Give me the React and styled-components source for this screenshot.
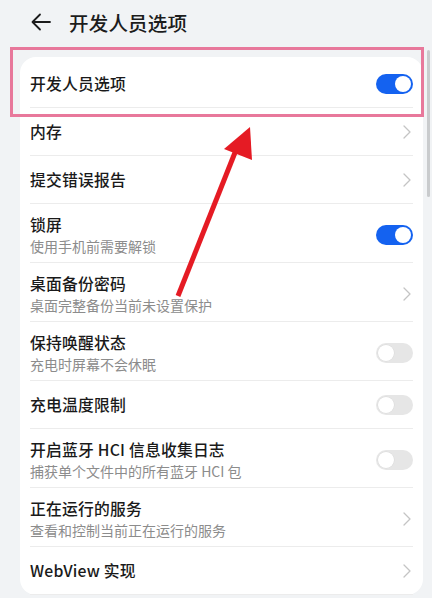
import React from "react";
import styled, { createGlobalStyle } from "styled-components";

const GlobalStyle = createGlobalStyle`
  html, body {
    margin: 0;
    padding: 0;
    background: #f1f3f5;
  }
  *, *::before, *::after {
    box-sizing: border-box;
  }
  body {
    font-family: "Noto Sans CJK SC", "Noto Sans", sans-serif;
    color: #1a1a1a;
  }
`;

const Page = styled.div`
  position: relative;
  width: 432px;
  height: 598px;
  overflow: hidden;
  background: #f1f3f5;
`;

const Header = styled.header`
  height: 44px;
  display: flex;
  align-items: center;
  padding-left: 31px;
  gap: 18px;
`;

const Title = styled.h1`
  margin: 0;
  font-size: 19.5px;
  font-weight: 500;
  color: #1c1c1c;
  letter-spacing: 0.2px;
`;

const Content = styled.div`
  padding: 13px 9px 0 20px;
`;

const Card = styled.div`
  position: relative;
  background: #ffffff;
  border-radius: 16px;
  padding: 3px 10px 0;
`;

const Highlight = styled.div`
  position: absolute;
  left: -10px;
  top: -10px;
  right: -1px;
  height: 70px;
  border: 3px solid #e8789b;
  pointer-events: none;
`;

const RowWrap = styled.div`
  display: flex;
  align-items: center;
  justify-content: space-between;
  height: ${(p) => (p.$sub ? "59px" : "48px")};
  padding-top: ${(p) => (p.$sub ? "3px" : "0")};
  border-bottom: 1px solid #ececec;
`;

const Texts = styled.div`
  display: flex;
  flex-direction: column;
  gap: 2px;
`;

const Label = styled.span`
  font-size: 15.8px;
  font-weight: 500;
  color: #1a1a1a;
  line-height: 21px;
  letter-spacing: 0.2px;
`;

const Sub = styled.span`
  font-size: 14px;
  color: #8c8c8c;
  line-height: 19px;
`;

const Toggle = styled.div`
  position: relative;
  width: 37px;
  height: 20px;
  border-radius: 10px;
  background: ${(p) => (p.$on ? "#1462f0" : "#e6e6e6")};
  flex-shrink: 0;

  &::after {
    content: "";
    position: absolute;
    top: 2px;
    left: ${(p) => (p.$on ? "19px" : "2px")};
    width: 16px;
    height: 16px;
    border-radius: 50%;
    background: #fff;
    box-shadow: ${(p) => (p.$on ? "none" : "0 0 0 0.5px #d8d8d8")};
  }
`;

const Chevron = styled.svg`
  width: 8px;
  height: 14px;
  margin-right: 2px;
  flex-shrink: 0;
`;

const Scrollbar = styled.div`
  position: absolute;
  right: 2px;
  top: 50px;
  width: 3px;
  height: 147px;
  border-radius: 2px;
  background: #c9cbcd;
`;

const ArrowLayer = styled.svg`
  position: absolute;
  left: 0;
  top: 0;
  pointer-events: none;
`;

const Arrow = () => (
  <ArrowLayer width="432" height="598" viewBox="0 0 432 598">
    <line x1="178" y1="296" x2="236" y2="150" stroke="#e51b24" strokeWidth="5" />
    <polygon points="250,127 224,149 252,160" fill="#e51b24" />
  </ArrowLayer>
);

const BackIcon = () => (
  <svg width="20" height="18" viewBox="0 0 20 18" fill="none">
    <path d="M19 9H2M9 1.5L1.5 9L9 16.5" stroke="#1c1c1c" strokeWidth="1.8" strokeLinecap="round" strokeLinejoin="round" />
  </svg>
);

const Row = ({ label, sub, type, on }) => (
  <RowWrap $sub={!!sub}>
    <Texts>
      <Label>{label}</Label>
      {sub && <Sub>{sub}</Sub>}
    </Texts>
    {type === "toggle" ? (
      <Toggle $on={on} />
    ) : (
      <Chevron viewBox="0 0 8 14" fill="none">
        <path d="M1 1l6 6-6 6" stroke="#c4c4c4" strokeWidth="1.3" strokeLinecap="round" strokeLinejoin="round" />
      </Chevron>
    )}
  </RowWrap>
);

const rows = [
  { label: "开发人员选项", type: "toggle", on: true },
  { label: "内存", type: "link" },
  { label: "提交错误报告", type: "link" },
  { label: "锁屏", sub: "使用手机前需要解锁", type: "toggle", on: true },
  { label: "桌面备份密码", sub: "桌面完整备份当前未设置保护", type: "link" },
  { label: "保持唤醒状态", sub: "充电时屏幕不会休眠", type: "toggle", on: false },
  { label: "充电温度限制", type: "toggle", on: false },
  { label: "开启蓝牙 HCI 信息收集日志", sub: "捕获单个文件中的所有蓝牙 HCI 包", type: "toggle", on: false },
  { label: "正在运行的服务", sub: "查看和控制当前正在运行的服务", type: "link" },
  { label: "WebView 实现", type: "link" },
];

export default function App() {
  return (
    <Page>
      <GlobalStyle />
      <Header>
        <BackIcon />
        <Title>开发人员选项</Title>
      </Header>
      <Content>
        <Card>
          <Highlight />
          {rows.map((r) => (
            <Row key={r.label} {...r} />
          ))}
        </Card>
      </Content>
      <Scrollbar />
      <Arrow />
    </Page>
  );
}
